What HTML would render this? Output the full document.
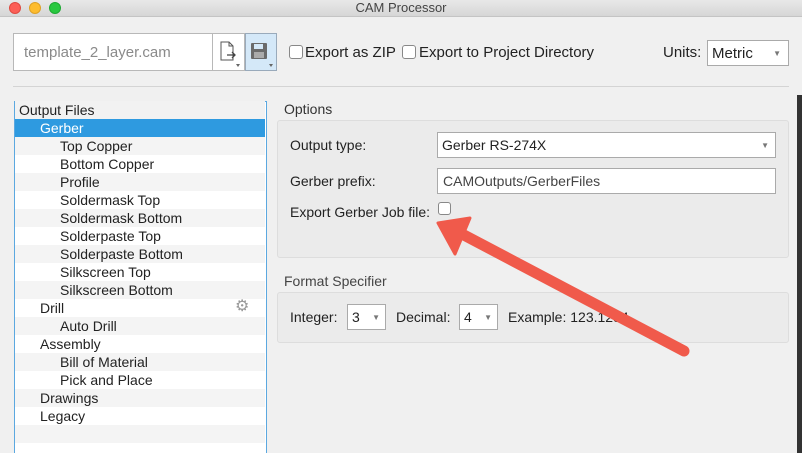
<!DOCTYPE html><html><head><style>
*{box-sizing:border-box}body{margin:0;width:802px;height:453px;overflow:hidden;background:#f0f0f0;font-family:"Liberation Sans",sans-serif;font-size:14px;color:#222;position:relative}
.a{position:absolute}
.title{left:0;top:0;width:802px;height:17px;background:linear-gradient(#e8e8e8,#d6d6d6);border-bottom:1px solid #c4c4c4;text-align:center;font-size:13px;line-height:16px;color:#444}
.dot{top:2px;width:12px;height:12px;border-radius:50%}
.box{background:#fff;border:1px solid #b8b8b8}
.cb{width:14px;height:14px;border:1px solid #888;border-radius:3px;background:#fff}
.row{position:absolute;left:15px;width:250px;height:18px;line-height:18px;font-size:14px}
.tri{font-size:8px;color:#777}
</style></head><body>
<div class="a title">CAM Processor</div>
<div class="a dot" style="left:9px;background:#fc5f57;border:1px solid #de4a41"></div>
<div class="a dot" style="left:29px;background:#fdbc2e;border:1px solid #dea125"></div>
<div class="a dot" style="left:49px;background:#29c840;border:1px solid #1ea932"></div>

<div class="a box" style="left:13px;top:33px;width:200px;height:38px;border-right:none;color:#8a8a8a;font-size:15px;line-height:38px;padding-left:10px">template_2_layer.cam</div>
<div class="a box" style="left:212px;top:33px;width:33px;height:38px"></div>
<svg class="a" style="left:218px;top:40px" width="24" height="28"><path d="M3 2h8l4 4v14H3z" fill="#fff" stroke="#555"/><path d="M11 2v4h4" fill="none" stroke="#555"/><path d="M9 15h8M14 12l3 3-3 3" fill="none" stroke="#444" stroke-width="1.3"/><path d="M18 24l4 0-2 3z" fill="#666"/></svg>
<div class="a" style="left:245px;top:33px;width:32px;height:38px;background:#d4e8f8;border:1px solid #9ab"></div>
<svg class="a" style="left:250px;top:42px" width="26" height="28"><rect x="1" y="1" width="16" height="16" rx="1" fill="#6a6a6a"/><rect x="4" y="2" width="9" height="5" fill="#d4e8f8"/><rect x="4" y="10" width="10" height="6" fill="#aaa"/><path d="M19 22l4 0-2 3z" fill="#666"/></svg>
<div class="a cb" style="left:289px;top:45px"></div>
<div class="a" style="left:305px;top:44px;font-size:15px">Export as ZIP</div>
<div class="a cb" style="left:402px;top:45px"></div>
<div class="a" style="left:419px;top:44px;font-size:15px">Export to Project Directory</div>
<div class="a" style="left:663px;top:44px;font-size:15px">Units:</div>
<div class="a box" style="left:707px;top:40px;width:82px;height:26px;border-color:#aaa;font-size:15px;line-height:25px;padding-left:4px">Metric<span class="a tri" style="right:7px;top:0">▼</span></div>
<div class="a" style="left:13px;top:86px;width:776px;height:1px;background:#d4d4d4"></div>
<div class="a" style="left:797px;top:95px;width:5px;height:358px;background:#333"></div>

<div class="a" style="left:14px;top:101px;width:253px;height:352px;background:#fff;border:1px solid #5ba8e0;border-bottom:none"></div>
<div class="row" style="top:101px;background:#f2f2f2;padding-left:4px">Output Files</div>
<div class="row" style="top:119px;background:#2e9ae0;color:#fff;padding-left:25px">Gerber</div>
<div class="row" style="top:137px;background:#f4f4f4;padding-left:45px">Top Copper</div>
<div class="row" style="top:155px;padding-left:45px">Bottom Copper</div>
<div class="row" style="top:173px;background:#f4f4f4;padding-left:45px">Profile</div>
<div class="row" style="top:191px;padding-left:45px">Soldermask Top</div>
<div class="row" style="top:209px;background:#f4f4f4;padding-left:45px">Soldermask Bottom</div>
<div class="row" style="top:227px;padding-left:45px">Solderpaste Top</div>
<div class="row" style="top:245px;background:#f4f4f4;padding-left:45px">Solderpaste Bottom</div>
<div class="row" style="top:263px;padding-left:45px">Silkscreen Top</div>
<div class="row" style="top:281px;background:#f4f4f4;padding-left:45px">Silkscreen Bottom</div>
<div class="row" style="top:299px;padding-left:25px">Drill<span class="a" style="left:220px;top:-1px;color:#999;font-size:16px">⚙</span></div>
<div class="row" style="top:317px;background:#f4f4f4;padding-left:45px">Auto Drill</div>
<div class="row" style="top:335px;padding-left:25px">Assembly</div>
<div class="row" style="top:353px;background:#f4f4f4;padding-left:45px">Bill of Material</div>
<div class="row" style="top:371px;padding-left:45px">Pick and Place</div>
<div class="row" style="top:389px;background:#f4f4f4;padding-left:25px">Drawings</div>
<div class="row" style="top:407px;padding-left:25px">Legacy</div>
<div class="row" style="top:425px;background:#f4f4f4"></div>

<div class="a" style="left:284px;top:101px;font-size:14px;color:#333">Options</div>
<div class="a" style="left:277px;top:120px;width:512px;height:138px;background:#ebebeb;border:1px solid #ddd;border-radius:3px"></div>
<div class="a" style="left:290px;top:137px">Output type:</div>
<div class="a box" style="left:437px;top:132px;width:339px;height:26px;border-color:#aaa;line-height:25px;padding-left:4px">Gerber RS-274X<span class="a tri" style="right:6px;top:0">▼</span></div>
<div class="a" style="left:290px;top:173px">Gerber prefix:</div>
<div class="a box" style="left:437px;top:168px;width:339px;height:26px;border-color:#aaa;line-height:25px;padding-left:5px;color:#444">CAMOutputs/GerberFiles</div>
<div class="a" style="left:290px;top:204px">Export Gerber Job file:</div>
<div class="a cb" style="left:438px;top:202px;width:13px;height:13px"></div>

<div class="a" style="left:284px;top:273px;color:#444">Format Specifier</div>
<div class="a" style="left:277px;top:292px;width:512px;height:51px;background:#ebebeb;border:1px solid #ddd;border-radius:3px"></div>
<div class="a" style="left:290px;top:309px">Integer:</div>
<div class="a box" style="left:347px;top:304px;width:39px;height:26px;border-color:#aaa;line-height:25px;padding-left:4px">3<span class="a tri" style="right:5px;top:0">▼</span></div>
<div class="a" style="left:396px;top:309px">Decimal:</div>
<div class="a box" style="left:459px;top:304px;width:39px;height:26px;border-color:#aaa;line-height:25px;padding-left:4px">4<span class="a tri" style="right:5px;top:0">▼</span></div>
<div class="a" style="left:508px;top:309px">Example: 123.1234</div>

<svg class="a" style="left:0;top:0" width="802" height="453"><line x1="684" y1="351" x2="462" y2="234" stroke="#f05a4b" stroke-width="11" stroke-linecap="round"/><path d="M438 223 L470 218 L455 254 Z" fill="#f05a4b" stroke="#f05a4b" stroke-width="3" stroke-linejoin="round"/></svg>
</body></html>
